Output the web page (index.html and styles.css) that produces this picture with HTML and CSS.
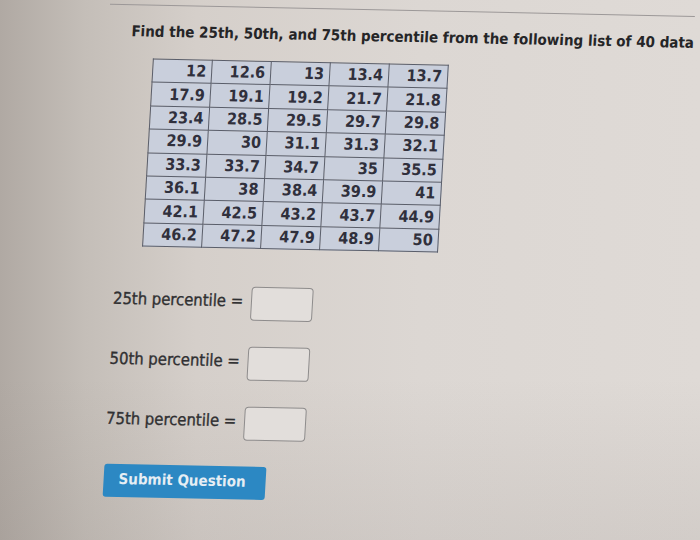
FILE: index.html
```html
<!DOCTYPE html>
<html>
<head>
<meta charset="utf-8">
<link rel="stylesheet" href="styles.css">
</head>
<body>
<div class="screen">
  <div class="sheet">
    <div class="header-line"></div>
    <p class="question">Find the 25th, 50th, and 75th percentile from the following list of 40 data</p>
    <table class="data">
      <tr><td>12</td><td>12.6</td><td>13</td><td>13.4</td><td>13.7</td></tr>
      <tr><td>17.9</td><td>19.1</td><td>19.2</td><td>21.7</td><td>21.8</td></tr>
      <tr><td>23.4</td><td>28.5</td><td>29.5</td><td>29.7</td><td>29.8</td></tr>
      <tr><td>29.9</td><td>30</td><td>31.1</td><td>31.3</td><td>32.1</td></tr>
      <tr><td>33.3</td><td>33.7</td><td>34.7</td><td>35</td><td>35.5</td></tr>
      <tr><td>36.1</td><td>38</td><td>38.4</td><td>39.9</td><td>41</td></tr>
      <tr><td>42.1</td><td>42.5</td><td>43.2</td><td>43.7</td><td>44.9</td></tr>
      <tr><td>46.2</td><td>47.2</td><td>47.9</td><td>48.9</td><td>50</td></tr>
    </table>
    <div class="answers">
      <div class="answer"><span class="label">25th percentile =</span><span class="box"></span></div>
      <div class="answer"><span class="label">50th percentile =</span><span class="box"></span></div>
      <div class="answer"><span class="label">75th percentile =</span><span class="box"></span></div>
    </div>
    <div class="submit">Submit Question</div>
  </div>
</div>
</body>
</html>
```
FILE: styles.css
```css
html, body {
  margin: 0;
  padding: 0;
}
body {
  width: 700px;
  height: 540px;
  overflow: hidden;
  background: linear-gradient(90deg, #b0a9a3 0%, #c4beb8 12%, #d5cfca 28%, #dcd7d3 60%, #dfdad6 100%);
  font-family: "DejaVu Sans Condensed", "DejaVu Sans", sans-serif;
  font-stretch: condensed;
  color: #2c2c2e;
}
.screen {
  width: 700px;
  height: 540px;
  background: linear-gradient(180deg, rgba(255,255,255,0) 70%, rgba(120,110,105,0.12) 100%);
}
.sheet {
  margin-left: 125px;
  padding-top: 4px;
  width: 570px;
  transform-origin: 0 4px;
  transform: rotate(1.2deg) skewX(-2.1deg);
  display: flex;
  flex-direction: column;
  align-items: flex-start;
}
.header-line {
  width: 585px;
  margin-left: -15px;
  border-top: 1px solid #9c9898;
}
.question {
  margin: 17px 0 0 8px;
  font-size: 15px;
  line-height: 18px;
  font-weight: bold;
  color: #252527;
  white-space: nowrap;
}
.data {
  margin: 18px 0 0 31px;
  border-collapse: collapse;
  border: 1px solid #4f5360;
}
.data td {
  width: 48px;
  height: 22.4px;
  padding: 0 5px;
  border: 1px solid #5a5e6a;
  background: #c9cfdc;
  text-align: right;
  font-size: 16px;
  line-height: 20px;
  font-weight: bold;
  color: #30303c;
}
.answers {
  margin-top: 38px;
  margin-left: 5px;
  display: flex;
  flex-direction: column;
  gap: 26px;
}
.answer {
  display: flex;
  align-items: center;
  gap: 5px;
}
.label {
  font-size: 16.5px;
  color: #303032;
  -webkit-text-stroke: 0.35px #303032;
  width: 133px;
  margin-top: -6px;
}
.box {
  width: 60px;
  height: 32px;
  border: 1.5px solid #8e8c8c;
  border-radius: 4px;
  background: #e2dedb;
}
.submit {
  margin: 26px 0 0 6px;
  width: 162px;
  height: 33px;
  box-sizing: border-box;
  padding-left: 15px;
  background: #2c88c3;
  border-radius: 3px;
  color: #e6eef4;
  font-size: 15px;
  font-weight: bold;
  line-height: 31px;
}
```
